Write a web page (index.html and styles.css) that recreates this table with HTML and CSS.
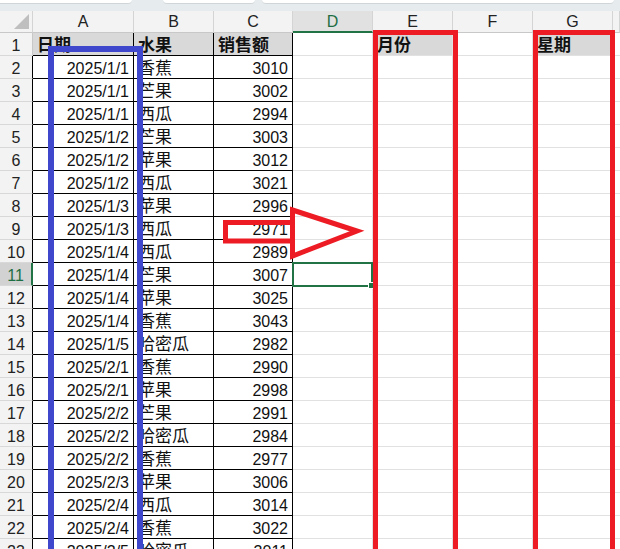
FILE: index.html
```html
<!DOCTYPE html>
<html lang="zh">
<head>
<meta charset="utf-8">
<title>Sheet</title>
<link rel="stylesheet" href="styles.css">
</head>
<body>
<div class="wrap">
  <div class="strip">
    <div class="pill p1"></div>
    <div class="pill p2"></div>
    <div class="pill p3"></div>
  </div>
  <div class="sheet">
    <div class="c h corner"><span class="tri"></span></div>
    <div class="c h">A</div><div class="c h">B</div><div class="c h">C</div>
    <div class="c h sel">D</div><div class="c h">E</div><div class="c h">F</div><div class="c h">G</div><div class="c h"></div>

    <div class="c rh">1</div>
    <div class="c b fill t">日期</div><div class="c b fill t">水果</div><div class="c b fill t">销售额</div>
    <div class="c"></div><div class="c fill t">月份</div><div class="c"></div><div class="c fill t">星期</div><div class="c"></div>

    <div class="c rh k">2</div><div class="c b n">2025/1/1</div><div class="c b z">香蕉</div><div class="c b n">3010</div><div class="c"></div><div class="c"></div><div class="c"></div><div class="c"></div><div class="c"></div>
    <div class="c rh k">3</div><div class="c b n">2025/1/1</div><div class="c b z">芒果</div><div class="c b n">3002</div><div class="c"></div><div class="c"></div><div class="c"></div><div class="c"></div><div class="c"></div>
    <div class="c rh k">4</div><div class="c b n">2025/1/1</div><div class="c b z">西瓜</div><div class="c b n">2994</div><div class="c"></div><div class="c"></div><div class="c"></div><div class="c"></div><div class="c"></div>
    <div class="c rh k">5</div><div class="c b n">2025/1/2</div><div class="c b z">芒果</div><div class="c b n">3003</div><div class="c"></div><div class="c"></div><div class="c"></div><div class="c"></div><div class="c"></div>
    <div class="c rh k">6</div><div class="c b n">2025/1/2</div><div class="c b z">苹果</div><div class="c b n">3012</div><div class="c"></div><div class="c"></div><div class="c"></div><div class="c"></div><div class="c"></div>
    <div class="c rh k">7</div><div class="c b n">2025/1/2</div><div class="c b z">西瓜</div><div class="c b n">3021</div><div class="c"></div><div class="c"></div><div class="c"></div><div class="c"></div><div class="c"></div>
    <div class="c rh k">8</div><div class="c b n">2025/1/3</div><div class="c b z">苹果</div><div class="c b n">2996</div><div class="c"></div><div class="c"></div><div class="c"></div><div class="c"></div><div class="c"></div>
    <div class="c rh k">9</div><div class="c b n">2025/1/3</div><div class="c b z">西瓜</div><div class="c b n">2971</div><div class="c"></div><div class="c"></div><div class="c"></div><div class="c"></div><div class="c"></div>
    <div class="c rh k">10</div><div class="c b n">2025/1/4</div><div class="c b z">西瓜</div><div class="c b n">2989</div><div class="c"></div><div class="c"></div><div class="c"></div><div class="c"></div><div class="c"></div>
    <div class="c rh k rsel">11</div><div class="c b n">2025/1/4</div><div class="c b z">芒果</div><div class="c b n">3007</div><div class="c"></div><div class="c"></div><div class="c"></div><div class="c"></div><div class="c"></div>
    <div class="c rh k">12</div><div class="c b n">2025/1/4</div><div class="c b z">苹果</div><div class="c b n">3025</div><div class="c"></div><div class="c"></div><div class="c"></div><div class="c"></div><div class="c"></div>
    <div class="c rh k">13</div><div class="c b n">2025/1/4</div><div class="c b z">香蕉</div><div class="c b n">3043</div><div class="c"></div><div class="c"></div><div class="c"></div><div class="c"></div><div class="c"></div>
    <div class="c rh k">14</div><div class="c b n">2025/1/5</div><div class="c b z">哈密瓜</div><div class="c b n">2982</div><div class="c"></div><div class="c"></div><div class="c"></div><div class="c"></div><div class="c"></div>
    <div class="c rh k">15</div><div class="c b n">2025/2/1</div><div class="c b z">香蕉</div><div class="c b n">2990</div><div class="c"></div><div class="c"></div><div class="c"></div><div class="c"></div><div class="c"></div>
    <div class="c rh k">16</div><div class="c b n">2025/2/1</div><div class="c b z">苹果</div><div class="c b n">2998</div><div class="c"></div><div class="c"></div><div class="c"></div><div class="c"></div><div class="c"></div>
    <div class="c rh k">17</div><div class="c b n">2025/2/2</div><div class="c b z">芒果</div><div class="c b n">2991</div><div class="c"></div><div class="c"></div><div class="c"></div><div class="c"></div><div class="c"></div>
    <div class="c rh k">18</div><div class="c b n">2025/2/2</div><div class="c b z">哈密瓜</div><div class="c b n">2984</div><div class="c"></div><div class="c"></div><div class="c"></div><div class="c"></div><div class="c"></div>
    <div class="c rh k">19</div><div class="c b n">2025/2/2</div><div class="c b z">香蕉</div><div class="c b n">2977</div><div class="c"></div><div class="c"></div><div class="c"></div><div class="c"></div><div class="c"></div>
    <div class="c rh k">20</div><div class="c b n">2025/2/3</div><div class="c b z">苹果</div><div class="c b n">3006</div><div class="c"></div><div class="c"></div><div class="c"></div><div class="c"></div><div class="c"></div>
    <div class="c rh k">21</div><div class="c b n">2025/2/4</div><div class="c b z">西瓜</div><div class="c b n">3014</div><div class="c"></div><div class="c"></div><div class="c"></div><div class="c"></div><div class="c"></div>
    <div class="c rh k">22</div><div class="c b n">2025/2/4</div><div class="c b z">香蕉</div><div class="c b n">3022</div><div class="c"></div><div class="c"></div><div class="c"></div><div class="c"></div><div class="c"></div>
    <div class="c rh k">23</div><div class="c b n">2025/2/5</div><div class="c b z">哈密瓜</div><div class="c b n">3011</div><div class="c"></div><div class="c"></div><div class="c"></div><div class="c"></div><div class="c"></div>
  </div>

  <div class="active"><span class="handle"></span></div>
  <div class="box-blue"></div>
  <div class="box-red box-e"></div>
  <div class="box-red box-g"></div>
  <svg class="arrow" width="620" height="549" viewBox="0 0 620 549">
    <path d="M292 222.5 H225.5 V241 H292" fill="none" stroke="#ed1c24" stroke-width="5"/>
    <path d="M292.5 210 L357 231 L292.5 256 Z" fill="none" stroke="#ed1c24" stroke-width="5" stroke-linejoin="miter"/>
  </svg>
</div>
</body>
</html>
```

FILE: styles.css
```css
html, body {
  margin: 0;
  padding: 0;
  background: #ffffff;
}
body {
  width: 620px;
  height: 549px;
  overflow: hidden;
  font-family: "Liberation Sans", "Noto Sans CJK SC", sans-serif;
  color: #111;
}
.wrap {
  position: relative;
  width: 620px;
  height: 549px;
  overflow: hidden;
}
.strip {
  height: 11px;
  background: #e6ecee;
  display: flex;
  align-items: flex-start;
  box-sizing: border-box;
}
.pill {
  height: 3px;
  background: #ffffff;
  border-bottom: 1px solid #d0d6d8;
  border-radius: 0 0 6px 6px;
}
.p1 { width: 136px; margin-left: -4px; }
.p2 { width: 92px; margin-left: 31px; }
.p3 { flex: 1; margin-left: 7px; margin-right: 6px; }

.sheet {
  display: grid;
  grid-template-columns: 33px 101px 80px 79px 80px 80px 80px 80px 7px;
  grid-template-rows: 22px;
  grid-auto-rows: 23px;
}
.c {
  box-sizing: border-box;
  border-right: 1px solid #e1e1e1;
  border-bottom: 1px solid #e1e1e1;
  font-size: 16px;
  line-height: 20px;
  padding: 3px 4px 0;
  white-space: nowrap;
  overflow: hidden;
}
.h {
  background: #f3f3f3;
  border-right-color: #d4d4d4;
  border-bottom-color: #c8c8c8;
  text-align: center;
  line-height: 22px;
  color: #222;
  padding: 0;
}
.corner {
  position: relative;
}
.tri {
  position: absolute;
  right: 3px;
  bottom: 3px;
  width: 0;
  height: 0;
  border-left: 15px solid transparent;
  border-bottom: 15px solid #bfbfbf;
}
.h.sel {
  background: #e1e1e1;
  color: #1e6e44;
  border-bottom: 2px solid #217346;
}
.rh {
  background: #f3f3f3;
  border-right-color: #c8c8c8;
  border-bottom-color: #d8d8d8;
  text-align: center;
  padding: 3px 0 0;
  color: #222;
}
.rh.k {
  border-right-color: #000;
}
.rh.rsel {
  background: #d2d2d2;
  color: #1e6e44;
  border-right: 2px solid #217346;
}
.b {
  border-right-color: #000;
  border-bottom-color: #000;
}
.fill {
  background: #d9d9d9;
}
.t {
  font-weight: bold;
  font-size: 17px;
}
.n {
  text-align: right;
}
.z {
  font-size: 17px;
}

.active {
  position: absolute;
  left: 292px;
  top: 262px;
  width: 81px;
  height: 25px;
  box-sizing: border-box;
  border: 2px solid #217346;
}
.handle {
  position: absolute;
  right: -4px;
  bottom: -4px;
  width: 5px;
  height: 5px;
  background: #217346;
  border: 1px solid #fff;
}
.box-blue {
  position: absolute;
  left: 48px;
  top: 46px;
  width: 95px;
  height: 600px;
  box-sizing: border-box;
  border: 6px solid #3f48cc;
}
.box-red {
  position: absolute;
  top: 30px;
  height: 600px;
  box-sizing: border-box;
  border: 5px solid #ed1c24;
}
.box-e {
  left: 373px;
  width: 85px;
}
.box-g {
  left: 533px;
  width: 82px;
}
.arrow {
  position: absolute;
  left: 0;
  top: 0;
}
```
